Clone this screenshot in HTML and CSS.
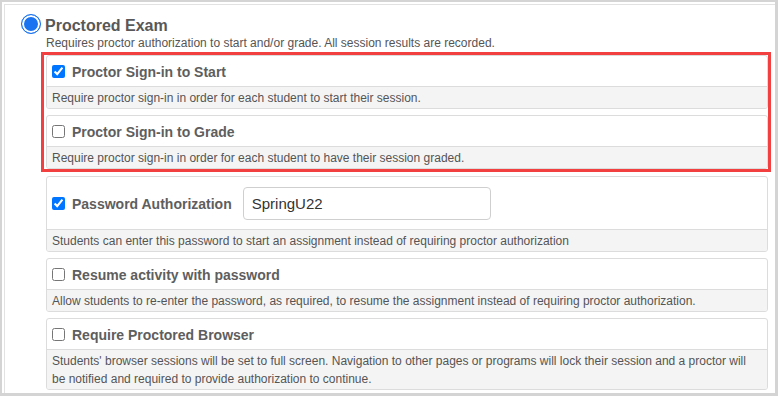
FILE: index.html
```html
<!DOCTYPE html>
<html>
<head>
<meta charset="utf-8">
<link rel="stylesheet" href="styles.css">
</head>
<body>
<div class="frame">
  <div class="panel">
    <div class="option">
      <span class="radio"></span>
      <div class="option-body">
        <div class="title">Proctored Exam</div>
        <div class="subtitle">Requires proctor authorization to start and/or grade. All session results are recorded.</div>

        <div class="highlight">
          <div class="card">
            <label class="card-head"><input type="checkbox" checked><span class="label">Proctor Sign-in to Start</span></label>
            <div class="card-desc">Require proctor sign-in in order for each student to start their session.</div>
          </div>
          <div class="card">
            <label class="card-head"><input type="checkbox"><span class="label">Proctor Sign-in to Grade</span></label>
            <div class="card-desc">Require proctor sign-in in order for each student to have their session graded.</div>
          </div>
        </div>

        <div class="cards">
          <div class="card">
            <div class="card-head tall">
              <label class="check"><input type="checkbox" checked><span class="label">Password Authorization</span></label>
              <input class="text-input" type="text" value="SpringU22">
            </div>
            <div class="card-desc">Students can enter this password to start an assignment instead of requiring proctor authorization</div>
          </div>
          <div class="card">
            <label class="card-head"><input type="checkbox"><span class="label">Resume activity with password</span></label>
            <div class="card-desc">Allow students to re-enter the password, as required, to resume the assignment instead of requiring proctor authorization.</div>
          </div>
          <div class="card">
            <label class="card-head"><input type="checkbox"><span class="label">Require Proctored Browser</span></label>
            <div class="card-desc">Students' browser sessions will be set to full screen. Navigation to other pages or programs will lock their session and a proctor will be notified and required to provide authorization to continue.</div>
          </div>
        </div>
      </div>
    </div>
  </div>
</div>
</body>
</html>
```

FILE: styles.css
```css
html, body {
  margin: 0;
  padding: 0;
  background: #fff;
}
body {
  font-family: "Liberation Sans", Arial, sans-serif;
  color: #555;
}
.frame {
  width: 778px;
  height: 396px;
  box-sizing: border-box;
  border: 2px solid #d4d4d4;
  border-right-width: 3px;
  border-bottom-width: 3px;
  padding: 2px 0 0 2px;
  overflow: hidden;
}
.panel {
  height: 100%;
  box-sizing: border-box;
  border-top: 1px solid #e2e2e2;
  border-left: 1px solid #e2e2e2;
  padding: 9px 7px 0 16px;
}
.option {
  display: flex;
  gap: 4px;
}
.radio {
  flex: none;
  width: 20px;
  height: 20px;
  box-sizing: border-box;
  border-radius: 50%;
  border: 1.5px solid #1a73f0;
  background: #1a73f0;
  box-shadow: inset 0 0 0 2px #fff;
}
.option-body {
  flex: 1;
  min-width: 0;
}
.title {
  font-size: 16px;
  font-weight: bold;
  color: #585858;
  line-height: 20px;
  padding-top: 2px;
}
.subtitle {
  font-size: 12px;
  line-height: 16px;
  margin: -1px 0 0 1px;
  color: #555;
}
.highlight {
  border: 3px solid #f24040;
  margin: 1px -3px 0 -4px;
  padding: 0 0 0 2px;
  display: flex;
  flex-direction: column;
  gap: 6px;
}
.cards {
  margin: 4px 0 0 1px;
  display: flex;
  flex-direction: column;
  gap: 6px;
}
.card {
  border: 1px solid #dcdcdc;
  border-radius: 3px;
  overflow: hidden;
  background: #fff;
}
.card-head {
  display: flex;
  align-items: center;
  height: 30px;
  padding: 1px 0 0 5px;
  box-sizing: border-box;
}
.card-head.tall {
  height: 52px;
  gap: 11px;
}
.check {
  display: flex;
  align-items: center;
}
.card-head input[type="checkbox"] {
  width: 13px;
  height: 13px;
  margin: 0 7px 0 0;
}
.label {
  font-size: 14px;
  font-weight: bold;
  color: #5e5e5e;
}
.card-desc {
  background: #f4f4f4;
  border-top: 1px solid #dcdcdc;
  font-size: 12px;
  line-height: 18px;
  padding: 2px 6px 1px 5px;
  color: #555;
}
.text-input {
  width: 248px;
  height: 33px;
  box-sizing: border-box;
  border: 1px solid #cfcfcf;
  border-radius: 4px;
  padding: 0 8px;
  font-family: "Liberation Sans", Arial, sans-serif;
  font-size: 15px;
  color: #333;
  outline: none;
}
```
